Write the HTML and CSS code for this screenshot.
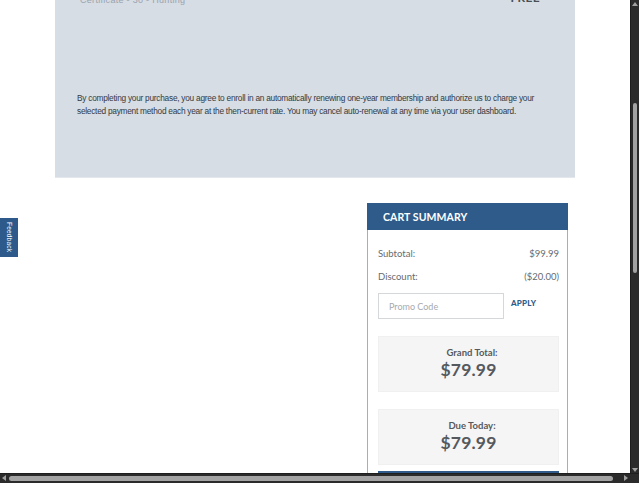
FILE: index.html
```html
<!DOCTYPE html>
<html>
<head>
<meta charset="utf-8">
<link rel="stylesheet" href="styles.css">
</head>
<body>
<div class="page">
  <section class="panel">
    <div class="panel-row">
      <span class="item-name">Certificate - 30 - Hunting</span>
      <span class="item-price">FREE</span>
    </div>
    <p class="terms">By completing your purchase, you agree to enroll in an automatically renewing one-year membership and authorize us to charge your selected payment method each year at the then-current rate. You may cancel auto-renewal at any time via your user dashboard.</p>
  </section>

  <aside class="cart">
    <div class="cart-head">CART SUMMARY</div>
    <div class="cart-body">
      <div class="line"><span>Subtotal:</span><span>$99.99</span></div>
      <div class="line"><span>Discount:</span><span>($20.00)</span></div>
      <div class="promo">
        <div class="promo-input">Promo Code</div>
        <span class="apply">APPLY</span>
      </div>
      <div class="total-box">
        <div class="total-label">Grand Total:</div>
        <div class="total-value">$79.99</div>
      </div>
      <div class="total-box">
        <div class="total-label due">Due Today:</div>
        <div class="total-value">$79.99</div>
      </div>
      <div class="checkout"></div>
    </div>
  </aside>
</div>

<div class="feedback"><span>Feedback</span></div>

<div class="vscroll">
  <span class="arrow up"></span>
  <span class="vthumb"></span>
  <span class="arrow down"></span>
</div>
<div class="hscroll">
  <span class="harrow left"></span>
  <span class="hthumb"></span>
  <span class="harrow right"></span>
</div>
</body>
</html>
```

FILE: styles.css
```css
html, body {
  margin: 0;
  padding: 0;
  background: #ffffff;
  overflow: hidden;
  width: 639px;
  height: 483px;
}

.page {
  width: 631px;
  height: 474px;
  overflow: hidden;
  display: flex;
  flex-direction: column;
  font-family: "Liberation Sans", Arial, sans-serif;
}

.panel {
  margin-left: 55px;
  width: 476px;
  height: 177px;
  background: #d6dde5;
  border-bottom: 1px solid #e4e8ec;
  display: flex;
  flex-direction: column;
  padding: 0 22px;
  box-sizing: content-box;
  flex-shrink: 0;
}

.panel-row {
  display: flex;
  justify-content: space-between;
  align-items: flex-end;
  margin-top: -8px;
  height: 13px;
  padding: 0 13px 0 3px;
}

.item-name {
  font-size: 9px;
  color: #9aa3ad;
  letter-spacing: 0.3px;
}

.item-price {
  font-family: Lato, "Liberation Sans", sans-serif;
  font-weight: 700;
  font-size: 12px;
  color: #4a4f55;
  letter-spacing: 0.3px;
}

.terms {
  margin: 87px 0 0 0;
  font-size: 8.3px;
  line-height: 12.5px;
  letter-spacing: -0.25px;
  color: #333a42;
}

.cart {
  margin: 25px 0 0 367px;
  width: 199px;
  border: 1px solid #9fb0c0;
  border-top: none;
  font-family: Lato, "Liberation Sans", sans-serif;
  flex-shrink: 0;
}

.cart-head {
  margin: 0 -1px;
  height: 27px;
  background: #2e5b8a;
  color: #ffffff;
  font-weight: 700;
  font-size: 10.5px;
  display: flex;
  align-items: center;
  padding-left: 16px;
  letter-spacing: 0.1px;
}

.cart-body {
  padding: 17px 8px 0 10px;
  display: flex;
  flex-direction: column;
}

.line {
  display: flex;
  justify-content: space-between;
  font-size: 9.5px;
  color: #666b70;
  height: 13px;
  line-height: 13px;
  margin-bottom: 10px;
}

.promo {
  display: flex;
  align-items: center;
}

.promo-input {
  width: 114px;
  height: 24px;
  border: 1px solid #d5d8db;
  font-size: 9px;
  color: #a6aaae;
  display: flex;
  align-items: center;
  padding-left: 10px;
}

.apply {
  margin-left: 7px;
  margin-top: -7px;
  font-size: 8px;
  font-weight: 900;
  color: #2e5b8a;
  letter-spacing: 0.2px;
}

.total-box {
  margin-top: 17px;
  height: 56px;
  background: #f5f5f5;
  border: 1px solid #f0f0f0;
  box-sizing: border-box;
  display: flex;
  flex-direction: column;
  align-items: center;
  padding-top: 10px;
  color: #55595d;
}

.total-label {
  font-size: 9.5px;
  font-weight: 700;
  line-height: 12px;
  padding-left: 7px;
}

.total-value {
  font-size: 17.5px;
  font-weight: 700;
  line-height: 22px;
  letter-spacing: 0.2px;
}

.checkout {
  margin-top: 6px;
  height: 20px;
  background: #2e5b8a;
}

.feedback {
  position: fixed;
  left: 0;
  top: 218px;
  width: 18px;
  height: 39px;
  background: #2d5a8a;
  display: flex;
  align-items: center;
  justify-content: center;
}

.feedback span {
  writing-mode: vertical-rl;
  font-family: "Liberation Sans", Arial, sans-serif;
  font-size: 6.5px;
  color: #ffffff;
  letter-spacing: 0.2px;
}

.vscroll {
  position: fixed;
  right: 0;
  top: 0;
  width: 8px;
  height: 474px;
  background: #2b2b2b;
  border-left: 1px solid #1e1e1e;
}

.vthumb {
  position: absolute;
  left: 2px;
  top: 103px;
  width: 4px;
  height: 170px;
  background: #a3a3a3;
  border-radius: 2px;
}

.arrow {
  position: absolute;
  left: 1px;
  width: 0;
  height: 0;
  border-left: 3px solid transparent;
  border-right: 3px solid transparent;
}

.arrow.up {
  top: 2px;
  border-bottom: 4px solid #a0a0a0;
}

.arrow.down {
  bottom: 2px;
  border-top: 4px solid #a0a0a0;
}

.hscroll {
  position: fixed;
  left: 0;
  bottom: 0;
  width: 639px;
  height: 9px;
  background: #2b2b2b;
  border-top: 1px solid #1e1e1e;
}

.hthumb {
  position: absolute;
  left: 9px;
  top: 2px;
  width: 604px;
  height: 5px;
  background: #a3a3a3;
  border-radius: 3px;
}

.harrow {
  position: absolute;
  top: 1px;
  width: 0;
  height: 0;
  border-top: 3px solid transparent;
  border-bottom: 3px solid transparent;
}

.harrow.left {
  left: 2px;
  border-right: 4px solid #a0a0a0;
}

.harrow.right {
  left: 624px;
  border-left: 4px solid #a0a0a0;
}
```
